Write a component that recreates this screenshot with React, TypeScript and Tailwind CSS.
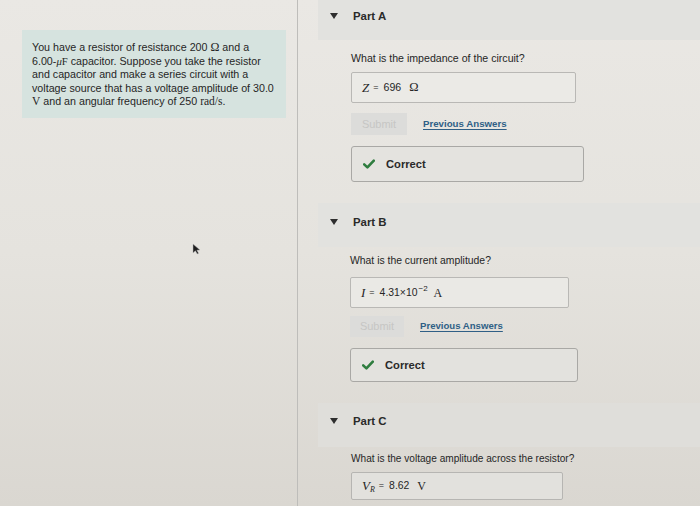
import React from "react";

const sans = { fontFamily: '"Liberation Sans", Arial, sans-serif' };

function Tri() {
  return (
    <svg width="8" height="6" viewBox="0 0 8 6" className="shrink-0">
      <path d="M0 0 L8 0 L4 6 Z" fill="#2e2e2e" />
    </svg>
  );
}

function Check() {
  return (
    <svg width="12" height="10" viewBox="0 0 12 10" className="shrink-0">
      <path d="M1.2 5.4 L4.4 8.4 L10.8 1.6" fill="none" stroke="#2f7d3f" strokeWidth="2.6" strokeLinecap="round" strokeLinejoin="round" />
    </svg>
  );
}

function M({ children, i }: { children: React.ReactNode; i?: boolean }) {
  return (
    <span className={i ? "font-['Liberation_Serif',serif] italic" : "font-['Liberation_Serif',serif]"}>{children}</span>
  );
}

export default function App() {
  return (
    <div
      className="relative w-[700px] h-[506px] overflow-hidden flex bg-linear-to-b from-[#eae8e4] via-[#e5e3de] to-[#dad7d1] text-[#262626] font-['Liberation_Sans',Arial,sans-serif]"
      style={sans}
    >
      {/* Left column */}
      <div className="w-[298px] shrink-0 border-r border-[#bebdba] pt-[30px] pl-[22px]">
        <div className="w-[264px] h-[88px] bg-[#d6e3df] pl-[10px] pt-[11px] text-[10.7px] leading-[13.5px] whitespace-nowrap">
          You have a resistor of resistance 200 <span className="text-[12px]"><M>Ω</M></span> and a
          <br />
          6.00-<M i>μ</M><M>F</M> capacitor. Suppose you take the resistor
          <br />
          and capacitor and make a series circuit with a
          <br />
          voltage source that has a voltage amplitude of 30.0
          <br />
          <span className="text-[11.5px]"><M>V</M></span> and an angular frequency of 250 <span className="text-[11.5px]"><M>rad/s</M></span>.
        </div>
      </div>

      {/* Right column */}
      <div className="flex-1 pl-[20px] flex flex-col">
        {/* Part A */}
        <div className="h-[40px] bg-[#e2e2df] flex items-start pt-[8px] pl-[12px] gap-[15px]">
          <div className="mt-[5px]"><Tri /></div>
          <span className="text-[11.4px] font-bold text-[#2a2a2a]">Part A</span>
        </div>
        <div className="pl-[33px]">
          <div className="mt-[11px] text-[10.6px] leading-[14px]">What is the impedance of the circuit?</div>
          <div className="mt-[7px] w-[225px] h-[31px] border border-[#b9b8b5] rounded-[2px] bg-[#ebeae6] flex items-center pl-[10px] text-[10.6px]">
            <M i><span className="text-[13px]">Z</span></M>
            <span className="text-[9px] ml-[4px]">=</span>
            <span className="ml-[5px]">696</span>
            <span className="ml-[8px] text-[12.5px]"><M>Ω</M></span>
          </div>
          <div className="mt-[10px] flex items-center gap-[16px]">
            <div className="w-[56px] h-[22px] bg-[#dcdcda] text-[#c6c6c4] text-[11px] flex items-center justify-center">Submit</div>
            <span className="text-[9.7px] font-bold text-[#2f5f86] underline underline-offset-2">Previous Answers</span>
          </div>
          <div className="mt-[11px] w-[233px] h-[36px] border border-[#a9a8a5] rounded-[3px] bg-[#e4e3df] flex items-center pl-[11px] gap-[11px]">
            <Check />
            <span className="text-[11.2px] font-bold text-[#2a2a2a]">Correct</span>
          </div>
        </div>

        {/* Part B */}
        <div className="mt-[21px] h-[44px] bg-[#e2e2df] flex items-start pt-[11px] pl-[12px] gap-[15px]">
          <div className="mt-[5px]"><Tri /></div>
          <span className="text-[11.4px] font-bold text-[#2a2a2a]">Part B</span>
        </div>
        <div className="pl-[32px]">
          <div className="mt-[7px] text-[10.4px] leading-[14px]">What is the current amplitude?</div>
          <div className="mt-[9px] w-[219px] h-[31px] border border-[#b9b8b5] rounded-[2px] bg-[#eae9e5] flex items-center pl-[10px] text-[10.4px]">
            <M i><span className="text-[13px]">I</span></M>
            <span className="text-[9px] ml-[4px]">=</span>
            <span className="ml-[5px]">4.31×10</span>
            <span className="text-[8px] relative -top-[4px] ml-[1px]">−2</span>
            <span className="ml-[6px] text-[12px]"><M>A</M></span>
          </div>
          <div className="mt-[8px] flex items-center gap-[16px]">
            <div className="w-[54px] h-[21px] bg-[#dcdcda] text-[#c6c6c4] text-[11px] flex items-center justify-center">Submit</div>
            <span className="text-[9.6px] font-bold text-[#2f5f86] underline underline-offset-2">Previous Answers</span>
          </div>
          <div className="mt-[11px] w-[228px] h-[34px] border border-[#a9a8a5] rounded-[3px] bg-[#e3e2de] flex items-center pl-[11px] gap-[11px]">
            <Check />
            <span className="text-[11.2px] font-bold text-[#2a2a2a]">Correct</span>
          </div>
        </div>

        {/* Part C */}
        <div className="mt-[21px] h-[44px] bg-[#dfdeda] flex items-start pt-[10px] pl-[12px] gap-[15px]">
          <div className="mt-[5px]"><Tri /></div>
          <span className="text-[11.4px] font-bold text-[#2a2a2a]">Part C</span>
        </div>
        <div className="pl-[33px]">
          <div className="mt-[5px] text-[10.1px] leading-[14px]">What is the voltage amplitude across the resistor?</div>
          <div className="mt-[6px] w-[212px] h-[28px] border border-[#b6b5b2] rounded-[2px] bg-[#e2e1dd] flex items-center pl-[10px] text-[10.4px]">
            <span className="text-[13px]"><M i>V</M><sub className="text-[8px] italic font-['Liberation_Serif',serif]">R</sub></span>
            <span className="text-[9px] ml-[4px]">=</span>
            <span className="ml-[5px]">8.62</span>
            <span className="ml-[8px] text-[12px]"><M>V</M></span>
          </div>
        </div>
      </div>

      {/* mouse cursor */}
      <svg className="absolute left-[192px] top-[243px]" width="9" height="12" viewBox="0 0 9 12">
        <path d="M1 1 L1 10 L3.4 7.8 L5.2 11 L6.6 10.3 L4.9 7.2 L8 7 Z" fill="#1e1e1e" stroke="#bbb" strokeWidth="0.5" />
      </svg>
    </div>
  );
}
